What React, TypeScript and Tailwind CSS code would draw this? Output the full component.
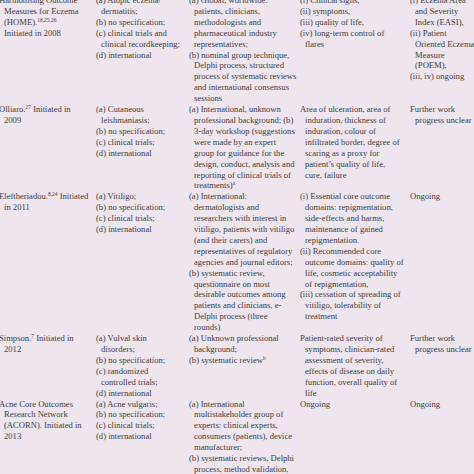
import React from 'react'

type Line = React.ReactNode
type Item = Line[]
type Cell = Item[]

const sup = (s: string) => <span className="relative -top-[3px] text-[5.5px] leading-none">{s}</span>

const rows: Cell[][] = [
  [
    [['Harmonising Outcome', 'Measures for Eczema', <>(HOME).{sup('18,25,26')}</>, 'Initiated in 2008']],
    [['(a) Atopic eczema/', 'dermatitis;'], ['(b) no specification;'], ['(c) clinical trials and', 'clinical recordkeeping;'], ['(d) international']],
    [
      ['(a) Global; worldwide:', 'patients, clinicians,', 'methodologists and', 'pharmaceutical industry', 'representatives;'],
      ['(b) nominal group technique,', 'Delphi process, structured', 'process of systematic reviews', 'and international consensus', 'sessions'],
    ],
    [['(i) Clinical signs,'], ['(ii) symptoms,'], ['(iii) quality of life,'], ['(iv) long-term control of', 'flares']],
    [['(i) Eczema Area', 'and Severity', 'Index (EASI),'], ['(ii) Patient', 'Oriented Eczema', 'Measure', '(POEM),'], ['(iii, iv) ongoing']],
  ],
  [
    [[<>Olliaro.{sup('27')} Initiated in</>, '2009']],
    [['(a) Cutaneous', 'leishmaniasis;'], ['(b) no specification;'], ['(c) clinical trials;'], ['(d) international']],
    [
      [
        '(a) International, unknown',
        'professional background; (b)',
        '3-day workshop (suggestions',
        'were made by an expert',
        'group for guidance for the',
        'design, conduct, analysis and',
        'reporting of clinical trials of',
        <>treatments){sup('a')}</>,
      ],
    ],
    [[
      'Area of ulceration, area of',
      'induration, thickness of',
      'induration, colour of',
      'infiltrated border, degree of',
      'scaring as a proxy for',
      'patient\u2019s quality of life,',
      'cure, failure',
    ]],
    [['Further work', 'progress unclear']],
  ],
  [
    [[<>Eleftheriadou.{sup('8,24')} Initiated</>, 'in 2011']],
    [['(a) Vitiligo;'], ['(b) no specification;'], ['(c) clinical trials;'], ['(d) international']],
    [
      [
        '(a) International:',
        'dermatologists and',
        'researchers with interest in',
        'vitiligo, patients with vitiligo',
        '(and their carers) and',
        'representatives of regulatory',
        'agencies and journal editors;',
      ],
      ['(b) systematic review,', 'questionnaire on most', 'desirable outcomes among', 'patients and clinicians, e-', 'Delphi process (three', 'rounds)'],
    ],
    [
      ['(i) Essential core outcome', 'domains: repigmentation,', 'side-effects and harms,', 'maintenance of gained', 'repigmentation.'],
      ['(ii) Recommended core', 'outcome domains: quality of', 'life, cosmetic acceptability', 'of repigmentation,'],
      ['(iii) cessation of spreading of', 'vitiligo, tolerability of', 'treatment'],
    ],
    [['Ongoing']],
  ],
  [
    [[<>Simpson.{sup('7')} Initiated in</>, '2012']],
    [['(a) Vulval skin', 'disorders;'], ['(b) no specification;'], ['(c) randomized', 'controlled trials;'], ['(d) international']],
    [['(a) Unknown professional', 'background;'], [<>(b) systematic review{sup('b')}</>]],
    [[
      'Patient-rated severity of',
      'symptoms, clinician-rated',
      'assessment of severity,',
      'effects of disease on daily',
      'function, overall quality of',
      'life',
    ]],
    [['Further work', 'progress unclear']],
  ],
  [
    [['Acne Core Outcomes', 'Research Network', '(ACORN). Initiated in', '2013']],
    [['(a) Acne vulgaris;'], ['(b) no specification;'], ['(c) clinical trials;'], ['(d) international']],
    [
      ['(a) International', 'multistakeholder group of', 'experts: clinical experts,', 'consumers (patients), device', 'manufacturer;'],
      ['(b) systematic reviews, Delphi', 'process, method validation,', 'consensus meeting'],
    ],
    [['Ongoing']],
    [['Ongoing']],
  ],
]

function CellView({ cell }: { cell: Cell }) {
  return (
    <div>
      {cell.map((item, i) => (
        <div key={i}>
          {item.map((line, j) => (
            <div key={j} className={j === 0 ? 'whitespace-nowrap' : 'whitespace-nowrap pl-[5px]'}>
              {line}
            </div>
          ))}
        </div>
      ))}
    </div>
  )
}

export default function App() {
  return (
    <div className="w-[474px] h-[474px] overflow-hidden bg-[#efe5ee]">
      <div
        className="-mt-[5px] -ml-[1px] text-[8.6px] leading-[10.9px] text-[#404040]"
        style={{ fontFamily: '"Liberation Serif", "Times New Roman", serif' }}
      >
        {rows.map((row, r) => (
          <div key={r} className="grid grid-cols-[97px_93px_111px_110px_80px]">
            {row.map((cell, c) => (
              <CellView key={c} cell={cell} />
            ))}
          </div>
        ))}
      </div>
    </div>
  )
}
